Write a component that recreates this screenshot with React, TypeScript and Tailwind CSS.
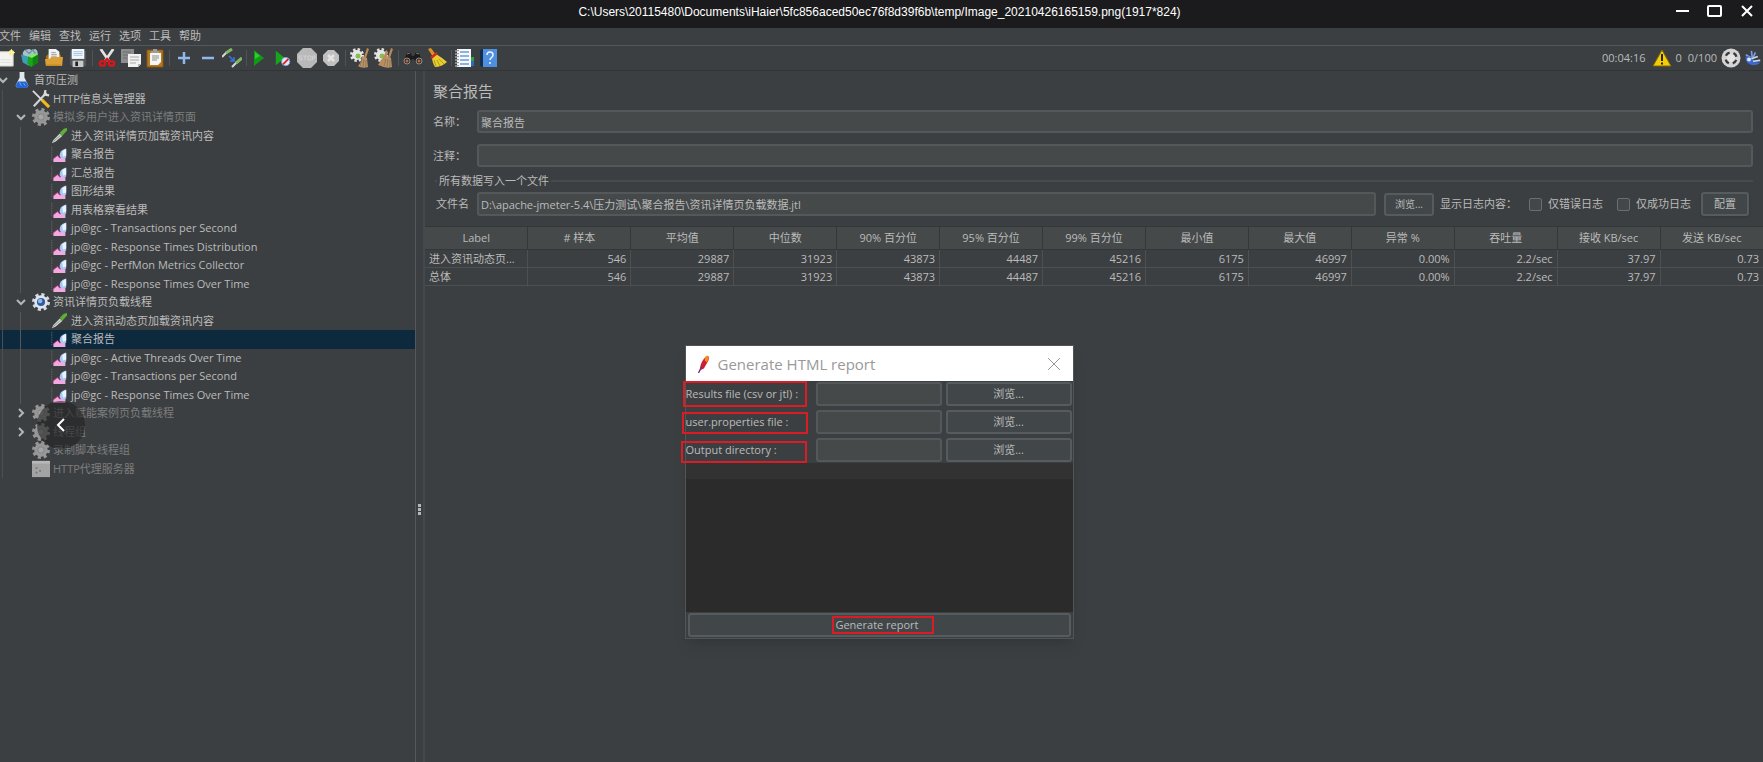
import { useState } from 'react';
import type { ReactNode } from 'react';
import clsx from 'clsx';

type IconName =
  | 'new' | 'templates' | 'open' | 'save' | 'cut' | 'copy' | 'paste' | 'plus' | 'minus' | 'toggle'
  | 'start' | 'startNoTimers' | 'stop' | 'shutdown' | 'clear' | 'clearAll' | 'search' | 'searchReset'
  | 'functions' | 'help' | 'warning' | 'remote' | 'comet' | 'plan' | 'tools' | 'gear' | 'gearOff'
  | 'sampler' | 'chart' | 'proxy' | 'feather';

const broom = (
  <>
    <path d="M17 0l2 1-3 9-2-1z" fill="#b98a58" />
    <path d="M12 8l5 2 1 9c-3 1-7 1-10-1 3-3 3-6 4-10z" fill="#b8946a" />
    <path d="M12 11l-2 7M14 11l-1 8M16 12v7" stroke="#957550" fill="none" />
  </>
);

const cog = (
  <>
    <circle cx="7" cy="7" r="5.5" fill="none" stroke="#e4e4e4" strokeWidth="3" strokeDasharray="2.3 2" />
    <circle cx="7" cy="7" r="5" fill="#e6e6e6" />
    <circle cx="8" cy="8" r="2.5" fill="#86bd52" />
  </>
);

const ICONS: Record<IconName, ReactNode> = {
  new: (
    <>
      <path d="M2 3h16v16H2z" fill="#f3f3f1" stroke="#c9c9c4" />
      <path d="M4 12h11M4 15h11" stroke="#ddd" />
      <circle cx="16" cy="4" r="3" fill="#f7ee8a" />
      <path d="M16 0v8M12 4h8" stroke="#fdf6a8" />
    </>
  ),
  templates: (
    <>
      <path d="M2 4l2-3 5-1 3 1 4-1 2 2 1 5-9 3-8-3z" fill="#a9c3cc" />
      <path d="M5 1l4 4 4-4 3 4" stroke="#6f97a8" fill="none" strokeWidth="1.5" />
      <path d="M0 6l9 3v10l-7-4z" fill="#3c9fb5" />
      <path d="M8 8l11-2v9l-8 5-4-4z" fill="#19a51c" />
      <path d="M8 8l4 2 7-4-6-1z" fill="#86ea5f" />
      <path d="M13 10v9l6-4V6z" fill="#0e8512" />
    </>
  ),
  open: (
    <>
      <path d="M1 8l2-2h14l1 2v8H1z" fill="#a97012" />
      <path d="M4 0h8l4 3v9H4z" fill="#f2f2f2" />
      <path d="M7 4h5M7 6h6M7 8h6" stroke="#9a9a9a" />
      <path d="M0 11h5l2-2h13l-1 10H1z" fill="#dca036" />
      <path d="M1 18h17" stroke="#b97c14" />
    </>
  ),
  save: (
    <>
      <path d="M1 2h18v17H3l-2-2z" fill="#52565c" />
      <path d="M3 0h14v11H3z" fill="#f3f7fb" />
      <path d="M5 3h10M5 5h10M5 7h10" stroke="#9fc0df" />
      <path d="M4 13h12v7H4z" fill="#c9c9c9" />
      <path d="M7 14h3v5H7z" fill="#222" />
    </>
  ),
  cut: (
    <>
      <path d="M3 0l9 13M17 0L8 13" stroke="#e3e3e3" strokeWidth="3" />
      <ellipse cx="5" cy="16" rx="3" ry="2.5" fill="none" stroke="#d9161b" strokeWidth="2.5" />
      <ellipse cx="15" cy="16" rx="3" ry="2.5" fill="none" stroke="#d9161b" strokeWidth="2.5" />
      <path d="M7 14l3-3 3 3" stroke="#d9161b" strokeWidth="2.5" fill="none" />
    </>
  ),
  copy: (
    <>
      <path d="M0 1h13v14H0z" fill="#8b8d8e" />
      <path d="M2 4h8M2 7h8M2 10h4" stroke="#6d6f70" />
      <path d="M7 6h13v10l-3 3H7z" fill="#f1f1ef" />
      <path d="M9 9h9M9 12h9M9 15h6" stroke="#a8a8a8" />
      <path d="M20 16h-3v3z" fill="#b5b5b5" />
    </>
  ),
  paste: (
    <>
      <path d="M2 2h16v17H2z" fill="#b47a22" stroke="#845511" />
      <path d="M5 5h11v9l-3 3H5z" fill="#f6f6f2" />
      <path d="M7 8h7M7 10h7M7 12h5" stroke="#8d8d8d" />
      <path d="M6 3h2V1h4v2h2v2H6z" fill="#9c9c9c" />
    </>
  ),
  plus: <path d="M10 4v12M4 10h12" stroke="#8fb9ee" strokeWidth="2.5" />,
  minus: <path d="M4 10h12" stroke="#8fb9ee" strokeWidth="2.5" />,
  toggle: (
    <>
      <path d="M0 9l5-5M10 19l5-5" stroke="#d6d6d0" strokeWidth="2" />
      <path d="M4 5l6-4M14 15l6-5" stroke="#7fb765" strokeWidth="3" />
      <path d="M7 8l5 5M12 9v4H8" stroke="#3577dd" strokeWidth="1.5" fill="none" />
    </>
  ),
  start: (
    <>
      <path d="M5 2l10 8-10 8z" fill="#0d9c13" />
      <path d="M6 4l5 4-5 3z" fill="#35c63a" />
    </>
  ),
  startNoTimers: (
    <>
      <path d="M2 2l10 8-10 8z" fill="#17a51d" />
      <circle cx="13" cy="14" r="4.5" fill="#dce9fa" stroke="#7a9fd0" />
      <path d="M10 17l6-6" stroke="#dc2020" strokeWidth="2" />
    </>
  ),
  stop: (
    <>
      <path d="M6 0h8l6 6v8l-6 6H6l-6-6V6z" fill="#b9b9b9" />
      <path d="M5 8H2v2h3v2H2M6 8h4M8 8v4M11 8h3v4h-3zM15.5 12V8H18v2h-2" stroke="#d0d0d0" fill="none" />
    </>
  ),
  shutdown: (
    <>
      <path d="M7 2h6l5 5v6l-5 5H7l-5-5V7z" fill="#c0c0c0" />
      <path d="M7 7l6 6M13 7l-6 6" stroke="#e4e4e4" strokeWidth="2.5" />
    </>
  ),
  clear: <>{cog}{broom}</>,
  clearAll: (
    <>
      {cog}
      <path d="M12 2l-2 6-6 9 6 2 4-15z" fill="#b98d5b" />
      {broom}
    </>
  ),
  search: (
    <>
      <path d="M4 5l3-1 2 4h2l2-4 3 1 3 8-6 2-2-4H9l-2 4-6-2z" fill="#1c1c1c" />
      <path d="M4 6l3-1M13 5l3 1" stroke="#777" />
      <circle cx="4" cy="13" r="3" fill="#3a2a20" stroke="#8f8f8f" />
      <circle cx="16" cy="13" r="3" fill="#3a2a20" stroke="#8f8f8f" />
      <circle cx="4" cy="13" r="1.5" fill="#b8693a" />
      <circle cx="16" cy="13" r="1.5" fill="#b8693a" />
    </>
  ),
  searchReset: (
    <>
      <path d="M1 1l3-1 5 7-3 2z" fill="#d99226" />
      <path d="M9 6l6 4 5 4c-3 3-8 5-12 5-2-3-3-7-3-10z" fill="#e8cd32" />
      <path d="M10 12l3 6M12 11l5 5M7 12l2 6" stroke="#b79a12" fill="none" />
      <path d="M4 10l6-5" stroke="#d3281f" strokeWidth="2.5" />
    </>
  ),
  functions: (
    <>
      <path d="M16 9h4v5h-4z" fill="#2fa436" />
      <path d="M16 13h4v5h-4z" fill="#2d68cf" />
      <path d="M3 1h14v18H3z" fill="#f6f8fb" />
      <path d="M6 4h9M6 8h9M6 12h9M6 16h9" stroke="#6b9ad8" strokeWidth="1.5" />
      <path d="M1 3h4M1 6h4M1 9h4M1 12h4M1 15h4M1 18h4" stroke="#d7d7d7" />
      <path d="M4 2v17" stroke="#555" strokeDasharray="1 2" />
    </>
  ),
  help: (
    <>
      <path d="M2 2l3-1v18l-3-1z" fill="#142c4d" />
      <path d="M5 1h14v18H5z" fill="#4f8fe0" />
      <path d="M9 7c0-4 6-4 6 0 0 2.5-3 2.5-3 5" fill="none" stroke="#eef5ff" strokeWidth="1.5" />
      <circle cx="12" cy="15" r="1" fill="#eef5ff" />
    </>
  ),
  warning: (
    <>
      <path d="M10 2l9 16H1z" fill="#f4cd08" stroke="#7d6a08" strokeLinejoin="round" />
      <path d="M10 6v7M10 14.5v2" stroke="#2b2400" strokeWidth="2" />
    </>
  ),
  remote: (
    <>
      <circle cx="10" cy="10" r="9.5" fill="#d4d4d4" />
      <circle cx="10" cy="10" r="5.5" fill="none" stroke="#3a3a3a" strokeWidth="2.5" strokeDasharray="4.6 4" strokeDashoffset="-2" />
      <circle cx="10" cy="10" r="4" fill="#e4e4e4" />
    </>
  ),
  comet: (
    <>
      <path d="M8 1l1 8M1 6l7 4M13 3l-3 7" stroke="#7d9fe6" strokeWidth="2" />
      <path d="M1 8c4-1 7 1 9 4 3 3 6 4 9 4-4 4-12 4-16 0-2-3-3-5-2-8z" fill="#3d69cc" />
      <path d="M8 11l8-3M10 14l9-1" stroke="#c9d8f7" strokeWidth="2" />
      <circle cx="5" cy="12" r="2.5" fill="#dbe6fb" />
    </>
  ),
  plan: (
    <>
      <path d="M7 0h6v7l5 10-2 3H4l-2-3L7 7z" fill="#dfe7ef" />
      <path d="M5 12h10l3 5-2 3H4l-2-3z" fill="#2467d0" />
      <path d="M7 13l2 4M12 14l2 3" stroke="#86b5ff" />
    </>
  ),
  tools: (
    <>
      <path d="M16 3L2 18" stroke="#d0d0d0" strokeWidth="2.5" />
      <path d="M15 0l-1 5 5 1" fill="none" stroke="#d8d8d8" strokeWidth="2.5" />
      <path d="M1 1l11 11" stroke="#ddd" strokeWidth="2" />
      <path d="M11 11l8 8" stroke="#f0b91d" strokeWidth="3.5" />
    </>
  ),
  gear: (
    <>
      <circle cx="10" cy="10" r="8" fill="none" stroke="#d3d9e2" strokeWidth="4" strokeDasharray="3.3 3" />
      <circle cx="10" cy="10" r="7.5" fill="#dfe4ec" />
      <circle cx="10" cy="10" r="4.5" fill="#33599a" />
      <circle cx="9" cy="9" r="2.5" fill="#8fb8ee" />
    </>
  ),
  gearOff: (
    <>
      <circle cx="10" cy="10" r="8" fill="none" stroke="#979797" strokeWidth="4" strokeDasharray="3.3 3" />
      <circle cx="10" cy="10" r="7.5" fill="#979797" />
      <circle cx="10" cy="10" r="3.5" fill="#a5a5a5" stroke="#828282" />
    </>
  ),
  sampler: (
    <>
      <path d="M1 19l2-4 8-8 3 3-8 7z" fill="#d4d9d2" />
      <path d="M3 17l9-8" stroke="#7d837b" />
      <path d="M11 6l5-5 4-1v3l-6 7z" fill="#5fae3a" />
    </>
  ),
  chart: (
    <>
      <path d="M1 1v18" stroke="#6a6c6e" strokeDasharray="2 1" />
      <path d="M3 16l5-4 3 3 5-1 2-2v8H3z" fill="#f2a9df" />
      <path d="M3 16l5-4 3 3 3-1" stroke="#d4277f" fill="none" />
      <path d="M11 13c-1-4 2-9 8-10v11c-3 3-6 2-8-1z" fill="#a8c9f5" />
      <path d="M14 7c2-2 3-3 5-3v8l-4 1z" fill="#eaf3ff" />
    </>
  ),
  proxy: (
    <>
      <path d="M0 1h20v18H0z" fill="#a3a3a3" />
      <path d="M0 1h20v3H0z" fill="#b8b8b8" />
      <path d="M4 9h2M4 14h2M8 12h2" stroke="#777" strokeWidth="2" />
    </>
  ),
  feather: (
    <>
      <path d="M13 2c4-2 4 1 3 4l-5 9-4 2c-1-5 2-11 6-15z" fill="#cf2033" />
      <path d="M12 3c2-3 5-3 4 2l-2 3-2-2z" fill="#f58a23" />
      <path d="M9 12l-2 4-2 4" stroke="#7b2a7d" strokeWidth="1.5" />
    </>
  ),
};

const Icon = ({ name, className }: { name: IconName; className?: string }) => (
  <svg viewBox="0 0 20 20" fill="none" aria-hidden="true" className={clsx('shrink-0', className)}>
    {ICONS[name]}
  </svg>
);

const TOOLBAR: { name: IconName; label: string; size?: string }[][] = [
  [
    { name: 'new', label: '新建' },
    { name: 'templates', label: '模板' },
    { name: 'open', label: '打开' },
    { name: 'save', label: '保存' },
  ],
  [
    { name: 'cut', label: '剪切' },
    { name: 'copy', label: '复制', size: 'size-5' },
    { name: 'paste', label: '粘贴', size: 'size-5' },
  ],
  [
    { name: 'plus', label: '展开', size: 'size-5' },
    { name: 'minus', label: '折叠', size: 'size-5' },
    { name: 'toggle', label: '切换', size: 'size-5' },
  ],
  [
    { name: 'start', label: '启动', size: 'size-5' },
    { name: 'startNoTimers', label: '不停顿开始' },
    { name: 'stop', label: '停止', size: 'size-5' },
    { name: 'shutdown', label: '关闭', size: 'size-5' },
  ],
  [
    { name: 'clear', label: '清除', size: 'size-5' },
    { name: 'clearAll', label: '清除全部', size: 'size-5' },
  ],
  [
    { name: 'search', label: '查找', size: 'size-5' },
    { name: 'searchReset', label: '重置查找', size: 'size-5' },
  ],
  [
    { name: 'functions', label: '函数助手', size: 'size-5' },
    { name: 'help', label: '帮助', size: 'size-5' },
  ],
];

const MENUS = ['文件', '编辑', '查找', '运行', '选项', '工具', '帮助'];

interface TreeNode {
  level: 0 | 1 | 2;
  icon: IconName;
  label: string;
  state?: 'open' | 'closed';
  disabled?: boolean;
  selected?: boolean;
}

const TREE: TreeNode[] = [
  { level: 0, icon: 'plan', label: '首页压测', state: 'open' },
  { level: 1, icon: 'tools', label: 'HTTP信息头管理器' },
  { level: 1, icon: 'gearOff', label: '模拟多用户进入资讯详情页面', state: 'open', disabled: true },
  { level: 2, icon: 'sampler', label: '进入资讯详情页加载资讯内容' },
  { level: 2, icon: 'chart', label: '聚合报告' },
  { level: 2, icon: 'chart', label: '汇总报告' },
  { level: 2, icon: 'chart', label: '图形结果' },
  { level: 2, icon: 'chart', label: '用表格察看结果' },
  { level: 2, icon: 'chart', label: 'jp@gc - Transactions per Second' },
  { level: 2, icon: 'chart', label: 'jp@gc - Response Times Distribution' },
  { level: 2, icon: 'chart', label: 'jp@gc - PerfMon Metrics Collector' },
  { level: 2, icon: 'chart', label: 'jp@gc - Response Times Over Time' },
  { level: 1, icon: 'gear', label: '资讯详情页负载线程', state: 'open' },
  { level: 2, icon: 'sampler', label: '进入资讯动态页加载资讯内容' },
  { level: 2, icon: 'chart', label: '聚合报告', selected: true },
  { level: 2, icon: 'chart', label: 'jp@gc - Active Threads Over Time' },
  { level: 2, icon: 'chart', label: 'jp@gc - Transactions per Second' },
  { level: 2, icon: 'chart', label: 'jp@gc - Response Times Over Time' },
  { level: 1, icon: 'gearOff', label: '进入赋能案例页负载线程', state: 'closed', disabled: true },
  { level: 1, icon: 'gearOff', label: '线程组', state: 'closed', disabled: true },
  { level: 1, icon: 'gearOff', label: '录制脚本线程组', disabled: true },
  { level: 1, icon: 'proxy', label: 'HTTP代理服务器', disabled: true },
];

const COLUMNS = [
  'Label', '# 样本', '平均值', '中位数', '90% 百分位', '95% 百分位', '99% 百分位',
  '最小值', '最大值', '异常 %', '吞吐量', '接收 KB/sec', '发送 KB/sec',
];

const VALUES = ['546', '29887', '31923', '43873', '44487', '45216', '6175', '46997', '0.00%', '2.2/sec', '37.97', '0.73'];

const ROWS = [
  ['进入资讯动态页...', ...VALUES],
  ['总体', ...VALUES],
];

const FIELD = 'min-w-0 rounded-[3px] border-2 border-[#55585a] bg-[#45494a] px-0.5 outline-none';
const BUTTON = 'rounded-[3px] border-2 border-[#565b5d] bg-[#414749] text-center';
const CHECKBOX = 'size-[13px] appearance-none rounded-xs border border-[#6b6e70] bg-[#43474a]';

const Chevron = ({ open }: { open: boolean }) => (
  <svg viewBox="0 0 10 10" className="size-[10px] shrink-0" fill="none" stroke="#b4b6b8" strokeWidth="2">
    <path d={open ? 'M1 3l4 4 4-4' : 'M3 1l4 4-4 4'} />
  </svg>
);

const TitleBar = () => (
  <header className="flex h-7 items-center bg-[#1b1b1d] pb-1 text-white">
    <div className="flex-1" />
    <h1 className="pl-1 font-['Liberation_Sans',sans-serif] text-[12px] leading-4">
      C:\Users\20115480\Documents\iHaier\5fc856aced50ec76f8d39f6b\temp/Image_20210426165159.png(1917*824)
    </h1>
    <div className="flex flex-1 justify-end gap-4 pr-2 pb-0.5">
      <button type="button" aria-label="最小化">
        <svg viewBox="0 0 16 16" className="size-4" fill="none" stroke="currentColor" strokeWidth="2">
          <path d="M1 8h13" />
        </svg>
      </button>
      <button type="button" aria-label="最大化">
        <svg viewBox="0 0 16 16" className="size-4" fill="none" stroke="currentColor" strokeWidth="2">
          <rect x="1" y="3" width="13" height="10" rx="1" />
        </svg>
      </button>
      <button type="button" aria-label="关闭窗口">
        <svg viewBox="0 0 16 16" className="size-4" fill="none" stroke="currentColor" strokeWidth="2">
          <path d="M3 3l10 10M13 3L3 13" />
        </svg>
      </button>
    </div>
  </header>
);

const Toolbar = () => (
  <div className="flex h-[25px] items-center border-b border-[#323436] pr-0.5">
    <div className="-ml-1.5 flex items-center">
      {TOOLBAR.map((group, i) => (
        <div key={group[0].name} className="flex items-center">
          {i > 0 && <span className={clsx('ml-0.5 h-4 w-px bg-[#515456]', i % 3 && 'mr-0.5')} />}
          {group.map(({ name, label, size }) => (
            <button key={name} type="button" title={label} aria-label={label} className="flex w-6 justify-center">
              <Icon name={name} className={size ?? 'size-[18px]'} />
            </button>
          ))}
        </div>
      ))}
    </div>
    <div className="ml-auto flex items-center gap-1">
      <span>00:04:16</span>
      <Icon name="warning" className="ml-0.5 size-5" />
      <span>0</span>
      <span className="ml-0.5">0/100</span>
      <Icon name="remote" className="size-5" />
      <Icon name="comet" className="size-4" />
    </div>
  </div>
);

const TreeRow = ({ node }: { node: TreeNode }) => (
  <li
    role="treeitem"
    aria-selected={!!node.selected}
    className={clsx('flex items-center whitespace-nowrap', node.selected && 'bg-[#0d293e]')}
  >
    {node.level === 0 ? (
      <span className="-ml-0.5 w-4">
        <Chevron open />
      </span>
    ) : (
      <span className="ml-0.5 w-2.5 self-stretch border-l border-[#4d5052]" />
    )}
    {node.level === 1 && (
      <span className="flex w-5 pl-1">{node.state && <Chevron open={node.state === 'open'} />}</span>
    )}
    {node.level === 2 && <span className="ml-2 w-[31px] self-stretch border-l border-[#55585a]" />}
    <Icon name={node.icon} className={node.level === 1 ? 'size-[18px]' : 'size-4'} />
    <span className={clsx(node.level === 0 ? 'ml-1' : node.level === 1 ? 'ml-[3px]' : 'ml-1', node.disabled && 'text-[#7c7e7f]')}>
      {node.label}
    </span>
  </li>
);

const TestPlanTree = () => (
  <aside className="relative w-[416px] shrink-0 border-r border-[#55585a]">
    <ul role="tree" className="grid h-[407px] grid-rows-[repeat(22,minmax(0,1fr))]">
      {TREE.map((node, i) => (
        <TreeRow key={i} node={node} />
      ))}
    </ul>
    <button
      type="button"
      aria-label="上一张"
      className="absolute top-[330px] left-[37px] flex size-12 items-center justify-center rounded-full bg-[#222]/60"
    >
      <svg viewBox="0 0 16 16" className="size-4" fill="none" stroke="#fff" strokeWidth="2">
        <path d="M11 2L5 8l6 6" />
      </svg>
    </button>
  </aside>
);

const Report = () => {
  const [name, setName] = useState('聚合报告');
  const [comment, setComment] = useState('');
  const [file, setFile] = useState('D:\\apache-jmeter-5.4\\压力测试\\聚合报告\\资讯详情页负载数据.jtl');

  return (
    <main className="min-w-0 flex-1 border-l-2 border-[#46494b]">
      <div className="pr-2.5 pl-2">
        <h2 className="pt-2.5 text-[15px] leading-5">聚合报告</h2>
        <div className="mt-[9px] flex items-center">
          <label htmlFor="name" className="w-11">名称：</label>
          <input id="name" className={clsx(FIELD, 'h-[23px] flex-1')} value={name} onChange={(e) => setName(e.target.value)} />
        </div>
        <div className="mt-[11px] flex items-center">
          <label htmlFor="comment" className="w-11">注释：</label>
          <input id="comment" className={clsx(FIELD, 'h-[23px] flex-1')} value={comment} onChange={(e) => setComment(e.target.value)} />
        </div>
        <section aria-labelledby="file-group" className="mt-1.5">
          <div className="flex items-center gap-0.5 pl-0.5">
            <span className="h-0.5 w-0.5 bg-[#4b4e50]" />
            <h3 id="file-group">所有数据写入一个文件</h3>
            <span className="h-0.5 flex-1 bg-[#484b4d]" />
          </div>
          <div className="mt-[3px] flex items-center pr-1">
            <label htmlFor="file" className="w-11 pl-[3px]">文件名</label>
            <input id="file" className={clsx(FIELD, 'h-6 flex-1')} value={file} onChange={(e) => setFile(e.target.value)} />
            <button type="button" className={clsx(BUTTON, 'ml-2 h-[23px] w-[50px] text-[10px]')}>浏览...</button>
            <span className="ml-1.5 w-[89px]">显示日志内容：</span>
            <label className="flex w-[88px] items-center gap-1.5">
              <input type="checkbox" className={CHECKBOX} />
              仅错误日志
            </label>
            <label className="flex w-[84px] items-center gap-1.5">
              <input type="checkbox" className={CHECKBOX} />
              仅成功日志
            </label>
            <button type="button" className={clsx(BUTTON, 'h-6 w-12 shadow-sm')}>配置</button>
          </div>
        </section>
      </div>
      <table className="mt-2.5 w-full table-fixed border-collapse">
        <thead>
          <tr className="h-[23px] border-y border-[#343739] bg-[#45494a]">
            {COLUMNS.map((column) => (
              <th key={column} scope="col" className="border-r border-[#353839] font-normal last:border-r-0">{column}</th>
            ))}
          </tr>
        </thead>
        <tbody>
          {ROWS.map(([label, ...values]) => (
            <tr key={label} className="h-[18px] border-b border-[#4d5051]">
              <td className="border-r border-[#4d5051] px-1 whitespace-nowrap">{label}</td>
              {values.map((value, i) => (
                <td key={i} className="border-r border-[#4d5051] px-1 text-right last:border-r-0">{value}</td>
              ))}
            </tr>
          ))}
        </tbody>
      </table>
    </main>
  );
};

const REPORT_FIELDS = [
  { id: 'results', label: 'Results file (csv or jtl) :', mark: '-top-px -left-[3px] h-[26px] w-[124px]' },
  { id: 'properties', label: 'user.properties file :', mark: 'top-0.5 -left-1 h-[22px] w-[126px]' },
  { id: 'output', label: 'Output directory :', mark: 'top-[3px] -left-[5px] h-[22px] w-[126px]' },
];

const ReportDialog = () => (
  <div
    role="dialog"
    aria-labelledby="dialog-title"
    className="absolute top-[345px] left-1/2 ml-[-197px] w-[389px] border border-[#525556] bg-[#3c3f41] shadow-lg"
  >
    <div className="flex h-[35px] items-center bg-white px-2 text-[#999]">
      <Icon name="feather" className="size-[18px]" />
      <h2 id="dialog-title" className="ml-1.5 text-[15px] leading-5">Generate HTML report</h2>
      <button type="button" aria-label="关闭" className="mr-1 ml-auto">
        <svg viewBox="0 0 14 14" className="size-3.5" fill="none" stroke="#999">
          <path d="M1 1l12 12M13 1L1 13" />
        </svg>
      </button>
    </div>
    <div className="grid grid-cols-3 gap-x-1 gap-y-1 py-px pr-px">
      {REPORT_FIELDS.map(({ id, label, mark }) => (
        <div key={id} className="col-span-3 grid grid-cols-subgrid items-center">
          <div className="relative flex h-6 items-center">
            <label htmlFor={id}>{label}</label>
            <span className={clsx('pointer-events-none absolute border-2 border-[#dc1c25]', mark)} />
          </div>
          <input id={id} className={clsx(FIELD, 'h-6 w-full')} />
          <button type="button" className={clsx(BUTTON, 'h-6')}>浏览...</button>
        </div>
      ))}
    </div>
    <div className="h-4 bg-[#323232]" />
    <div className="h-[133px] bg-[#2b2b2b]" />
    <div className="px-0.5 py-px">
      <button type="button" className={clsx(BUTTON, 'flex h-6 w-full items-center justify-center pl-2')}>
        <span className="w-[102px] border-2 border-[#dc1c25] pr-3 leading-[14px]">Generate report</span>
      </button>
    </div>
  </div>
);

const App = () => (
  <div className="relative flex min-h-screen flex-col overflow-hidden bg-[#3c3f41] font-['Open_Sans','Noto_Sans_CJK_SC',sans-serif] text-[11px] leading-4 text-[#bbb]">
    <TitleBar />
    <nav aria-label="菜单" className="flex h-[18px] items-center gap-2 border-b border-[#55585a] pb-0.5">
      {MENUS.map((menu) => (
        <button key={menu} type="button" className="-ml-px pr-px">{menu}</button>
      ))}
    </nav>
    <Toolbar />
    <div className="flex flex-1">
      <TestPlanTree />
      <div className="flex w-[7px] shrink-0 items-center justify-center">
        <div className="flex flex-col gap-px pt-[185px]">
          <span className="size-[3px] bg-[#b5b7b8]" />
          <span className="size-[3px] bg-[#b5b7b8]" />
          <span className="size-[3px] bg-[#b5b7b8]" />
        </div>
      </div>
      <Report />
    </div>
    <ReportDialog />
  </div>
);

export default App;
